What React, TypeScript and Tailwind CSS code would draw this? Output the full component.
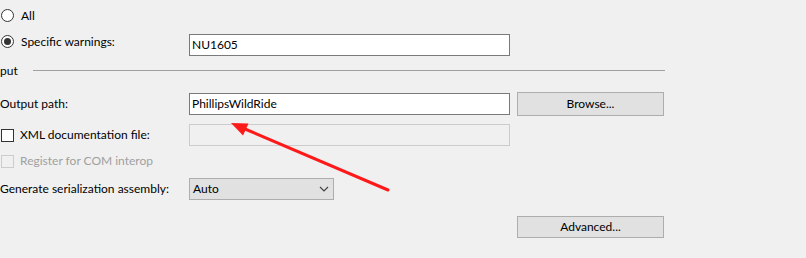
import React from 'react';

function Radio({ checked }: { checked?: boolean }) {
  return (
    <span className="w-[13px] h-[13px] rounded-full border border-[#333333] bg-white flex items-center justify-center shrink-0">
      {checked && <span className="w-[7px] h-[7px] rounded-full bg-[#333333]" />}
    </span>
  );
}

function Checkbox({ disabled }: { disabled?: boolean }) {
  return (
    <span
      className={
        disabled
          ? 'w-[13px] h-[13px] border border-[#cccccc] bg-[#f0f0f0] shrink-0'
          : 'w-[13px] h-[13px] border border-[#333333] bg-white shrink-0'
      }
    />
  );
}

export default function App() {
  return (
    <div className="relative w-[806px] h-[258px] overflow-hidden bg-[#f0f0f0] text-[12px] leading-none text-black font-['Lato','Noto_Sans',sans-serif]">
      {/* Warnings */}
      <div className="flex items-center gap-[7px] h-[13px] mt-[9px] pl-[1px]">
        <Radio />
        <span>All</span>
      </div>

      <div className="flex h-[22px] mt-[12px]">
        <div className="w-[189px] flex items-start pl-[1px] pt-[1px]">
          <div className="flex items-center gap-[7px] h-[13px]">
            <Radio checked />
            <span>Specific warnings:</span>
          </div>
        </div>
        <div className="w-[321px] h-[22px] border border-[#7a7a7a] bg-white flex items-center px-[2px]">
          NU1605
        </div>
      </div>

      {/* Output group */}
      <div className="flex items-center w-[665px] h-[13px] mt-[8px]">
        <span className="w-[33px]">put</span>
        <div className="flex-1 h-px bg-[#a0a0a0]" />
      </div>

      <div className="flex items-center h-[24px] mt-[15px]">
        <span className="w-[189px]">Output path:</span>
        <div className="w-[321px] h-[22px] border border-[#7a7a7a] bg-white flex items-center px-[2px]">
          PhillipsWildRide
        </div>
        <button className="ml-[7px] w-[147px] h-[24px] border border-[#adadad] bg-[#e1e1e1] flex items-center justify-center">
          Browse...
        </button>
      </div>

      <div className="flex items-center h-[22px] mt-[8px]">
        <div className="w-[189px] flex items-center gap-[6px] pl-[1px]">
          <Checkbox />
          <span>XML documentation file:</span>
        </div>
        <div className="w-[321px] h-[22px] border border-[#cccccc] bg-[#f0f0f0]" />
      </div>

      <div className="flex items-center gap-[6px] h-[26px] mt-[2px] pl-[1px] text-[#a0a0a0]">
        <Checkbox disabled />
        <span>Register for COM interop</span>
      </div>

      <div className="flex items-center h-[22px] mt-[4px]">
        <span className="w-[189px]">Generate serialization assembly:</span>
        <div className="w-[145px] h-[22px] border border-[#adadad] bg-[#e1e1e1] flex items-center justify-between pl-[3px] pr-[4px]">
          <span>Auto</span>
          <svg width="10" height="6" viewBox="0 0 10 6" className="text-[#444444]">
            <path d="M1 1 L5 5 L9 1" fill="none" stroke="currentColor" strokeWidth="1.2" />
          </svg>
        </div>
      </div>

      <div className="flex mt-[16px] pl-[517px]">
        <button className="w-[147px] h-[22px] border border-[#adadad] bg-[#e1e1e1] flex items-center justify-center">
          Advanced...
        </button>
      </div>

      {/* Red annotation arrow */}
      <svg className="absolute inset-0 pointer-events-none" width="806" height="258" viewBox="0 0 806 258">
        <line x1="388" y1="190" x2="245" y2="129" stroke="#ff1a1a" strokeWidth="3" strokeLinecap="round" />
        <polygon points="231,123 248.5,123.5 243,135.5" fill="#ff1a1a" />
      </svg>
    </div>
  );
}
